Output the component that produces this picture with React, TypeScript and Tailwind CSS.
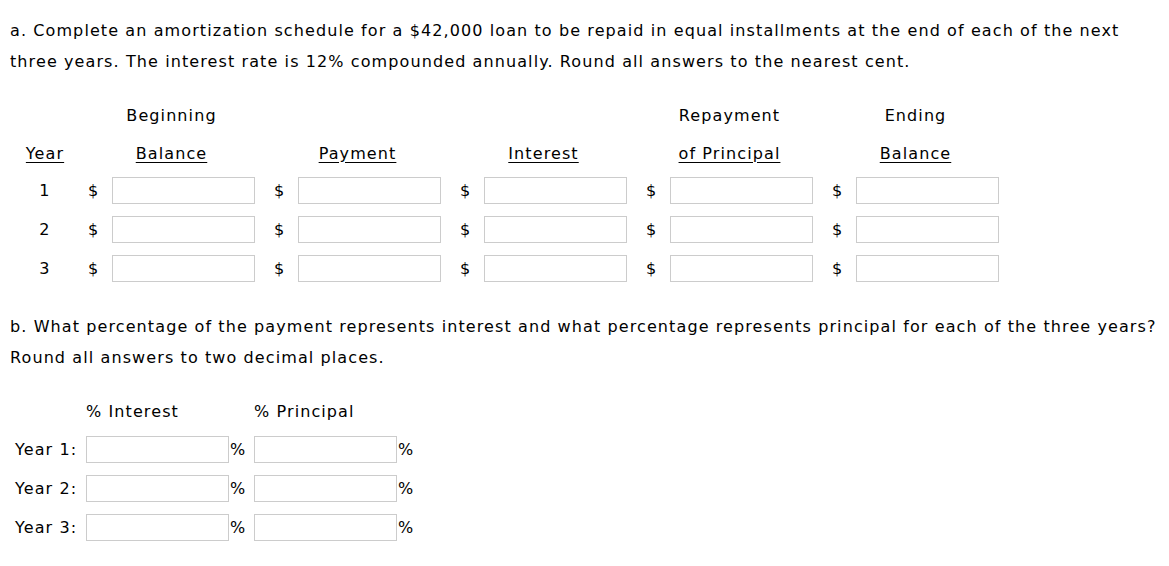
import React from "react";

const groupsA = [
  { top: "Beginning", bottom: "Balance" },
  { top: "", bottom: "Payment" },
  { top: "", bottom: "Interest" },
  { top: "Repayment", bottom: "of Principal" },
  { top: "Ending", bottom: "Balance" },
];

function Box() {
  return <div className="w-[143px] h-[27px] border border-[#cccccc] bg-white shrink-0" />;
}

export default function App() {
  return (
    <div
      className="bg-white text-black w-[1169px] h-[566px] text-[16px] tracking-[1.1px] pl-[10px] pt-[15px]"
      style={{ fontFamily: '"DejaVu Sans", Verdana, sans-serif' }}
    >
      <p className="leading-[31px]">
        a. Complete an amortization schedule for a $42,000 loan to be repaid in equal installments at the end of each of the next three years. The interest rate is 12% compounded annually. Round all answers to the nearest cent.
      </p>

      {/* Part a table */}
      <div className="mt-[23px] flex flex-col">
        <div className="flex h-[31px] items-center">
          <div className="w-[78px] shrink-0" />
          {groupsA.map((g, i) => (
            <div key={i} className="w-[167px] mr-[19px] shrink-0 text-center">
              {g.top}
            </div>
          ))}
        </div>
        <div className="flex h-[31px] items-center mt-[7px]">
          <div className="w-[70px] shrink-0 text-center underline underline-offset-[3px]">Year</div>
          <div className="w-[8px] shrink-0" />
          {groupsA.map((g, i) => (
            <div key={i} className="w-[167px] mr-[19px] shrink-0 text-center underline underline-offset-[3px]">
              {g.bottom}
            </div>
          ))}
        </div>
        <div className="flex flex-col gap-[12px] mt-[8px]">
          {[1, 2, 3].map((y) => (
            <div key={y} className="flex items-center h-[27px]">
              <div className="w-[70px] shrink-0 text-center">{y}</div>
              <div className="w-[8px] shrink-0" />
              {groupsA.map((_, i) => (
                <div key={i} className="flex items-center w-[167px] mr-[19px] shrink-0">
                  <div className="w-[24px] shrink-0">$</div>
                  <Box />
                </div>
              ))}
            </div>
          ))}
        </div>
      </div>

      {/* Part b */}
      <p className="leading-[31px] mt-[29px]">
        b. What percentage of the payment represents interest and what percentage represents principal for each of the three years? Round all answers to two decimal places.
      </p>

      <div className="mt-[23px] flex flex-col">
        <div className="flex h-[31px] items-center">
          <div className="w-[76px] shrink-0" />
          <div className="w-[168px] shrink-0">% Interest</div>
          <div>% Principal</div>
        </div>
        <div className="flex flex-col gap-[12px] mt-[9px]">
          {[1, 2, 3].map((y) => (
            <div key={y} className="flex items-center h-[27px]">
              <div className="w-[76px] shrink-0 pl-[5px]">Year {y}:</div>
              <Box />
              <div className="w-[25px] shrink-0 pl-[1px]">%</div>
              <Box />
              <div className="w-[25px] shrink-0 pl-[1px]">%</div>
            </div>
          ))}
        </div>
      </div>
    </div>
  );
}
